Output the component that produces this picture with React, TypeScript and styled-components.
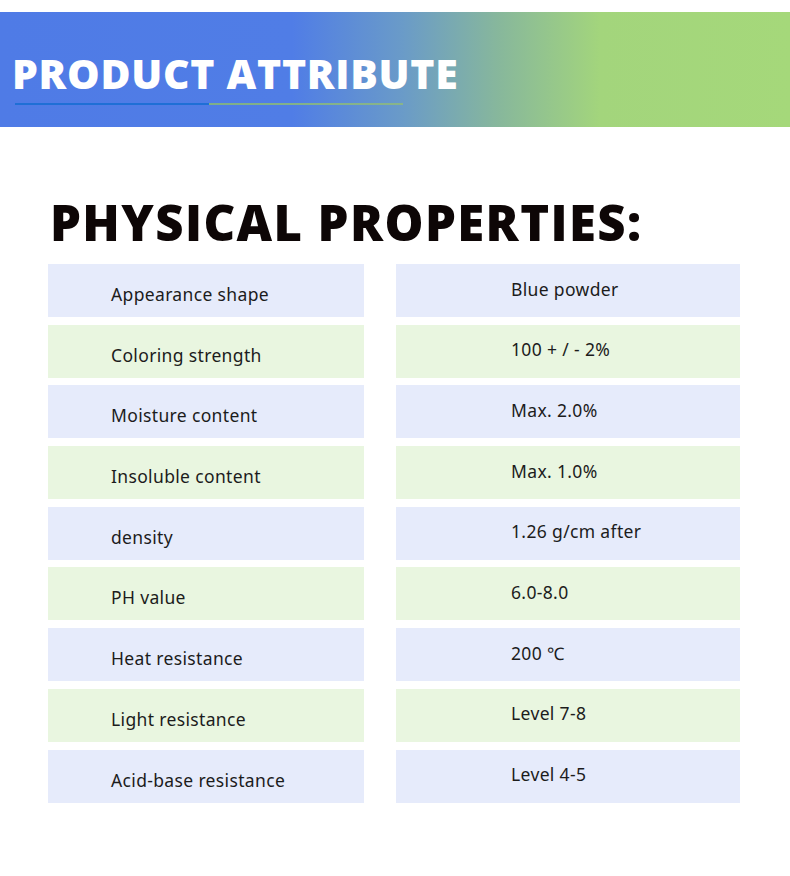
import React from "react";
import styled, { createGlobalStyle } from "styled-components";

const GlobalStyle = createGlobalStyle`
  html, body { margin: 0; padding: 0; background: #ffffff; }
  body { font-family: "Noto Sans", "Open Sans", sans-serif; }
`;

const Page = styled.div`
  width: 790px;
  height: 876px;
  background: #ffffff;
  padding-top: 12px;
  box-sizing: border-box;
  overflow: hidden;
`;

const Banner = styled.header`
  height: 115px;
  background: linear-gradient(90deg, #4f7be6 0%, #507de6 37%, #6a9bc8 51%, #87b79c 63%, #a3d57c 76%, #a5d87a 100%);
  padding: 39px 0 0 12px;
  box-sizing: border-box;
  display: flex;
  flex-direction: column;
`;

const BannerTitle = styled.h1`
  margin: 0;
  font-family: "Open Sans", sans-serif;
  font-weight: 800;
  font-size: 41px;
  line-height: 44px;
  color: #ffffff;
  letter-spacing: 0.7px;
`;

const Underline = styled.div`
  margin: 8px 0 0 3px;
  width: 388px;
  height: 2px;
  background: linear-gradient(90deg, #1f6fd6 0%, #1f6fd6 50%, #7eae88 50%, #88b48a 100%);
`;

const Heading = styled.h2`
  margin: 0;
  padding: 68px 0 0 50px;
  font-family: "Open Sans", sans-serif;
  font-weight: 800;
  font-size: 49px;
  line-height: 54px;
  color: #0d0606;
  letter-spacing: 1.4px;
`;

const Table = styled.div`
  margin: 15px 0 0 48px;
  display: grid;
  grid-template-columns: 316px 344px;
  grid-auto-rows: 53px;
  column-gap: 32px;
  row-gap: 7.7px;
`;

const Cell = styled.div<{ $tone: "blue" | "green"; $side: "label" | "value" }>`
  background: ${(p) => (p.$tone === "blue" ? "#e6ebfb" : "#e9f6e0")};
  display: flex;
  align-items: center;
  box-sizing: border-box;
  padding-left: ${(p) => (p.$side === "label" ? "63px" : "115px")};
  padding-top: ${(p) => (p.$side === "label" ? "7px" : "0")};
  padding-bottom: ${(p) => (p.$side === "label" ? "0" : "4px")};
  font-family: "Noto Sans", "Open Sans", sans-serif;
  font-size: 17.5px;
  color: #1c1c1c;
  letter-spacing: 0.35px;
`;

const rows: [string, string][] = [
  ["Appearance shape", "Blue powder"],
  ["Coloring strength", "100 + / - 2%"],
  ["Moisture content", "Max. 2.0%"],
  ["Insoluble content", "Max. 1.0%"],
  ["density", "1.26 g/cm after"],
  ["PH value", "6.0-8.0"],
  ["Heat resistance", "200 ℃"],
  ["Light resistance", "Level 7-8"],
  ["Acid-base resistance", "Level 4-5"],
];

export default function App() {
  return (
    <>
      <GlobalStyle />
      <Page>
        <Banner>
          <BannerTitle>PRODUCT ATTRIBUTE</BannerTitle>
          <Underline />
        </Banner>
        <Heading>PHYSICAL PROPERTIES:</Heading>
        <Table>
          {rows.map(([label, value], i) => {
            const tone = i % 2 === 0 ? "blue" : "green";
            return (
              <React.Fragment key={label}>
                <Cell $tone={tone} $side="label">{label}</Cell>
                <Cell $tone={tone} $side="value">{value}</Cell>
              </React.Fragment>
            );
          })}
        </Table>
      </Page>
    </>
  );
}
